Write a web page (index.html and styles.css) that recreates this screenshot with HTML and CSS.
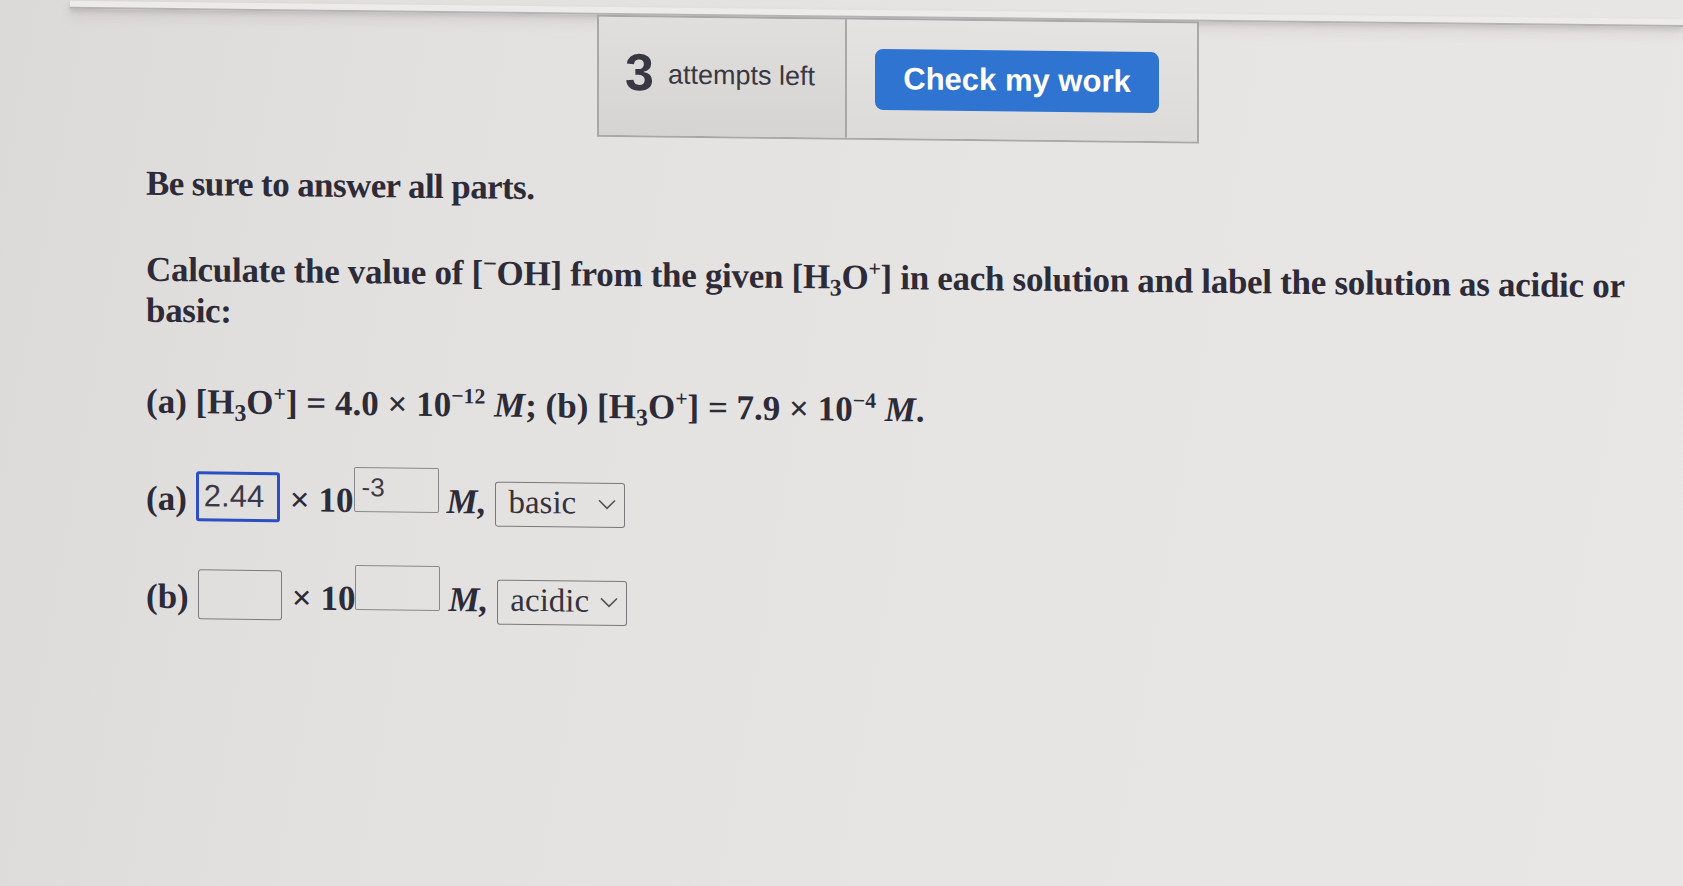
FILE: index.html
```html
<!DOCTYPE html>
<html lang="en">
<head>
<meta charset="utf-8">
<title>Question</title>
<link rel="stylesheet" href="styles.css">
</head>
<body>
<div class="screen">
  <div class="topbar"></div>

  <div class="toolbar">
    <div class="attempts">
      <span class="count">3</span>
      <span class="label">attempts left</span>
    </div>
    <div class="actions">
      <button class="check" type="button">Check my work</button>
    </div>
  </div>

  <div class="question">
    <p class="intro">Be sure to answer all parts.</p>
    <p class="prompt">Calculate the value of [<sup class="pre">&minus;</sup>OH] from the given [H<sub>3</sub>O<sup>+</sup>] in each solution and label the solution as acidic or basic:</p>
    <p class="given">(a) [H<sub>3</sub>O<sup>+</sup>] = 4.0 &times; 10<sup>&minus;12</sup> <i>M</i>; (b) [H<sub>3</sub>O<sup>+</sup>] = 7.9 &times; 10<sup>&minus;4</sup> <i>M</i>.</p>

    <div class="answer answer-a">
      <span class="tag">(a)</span>
      <span class="mantissa active">2.44</span>
      <span class="times">&times; 10</span>
      <span class="exponent">-3</span>
      <span class="unit">M,</span>
      <span class="select"><span class="choice">basic</span><svg class="chev" width="18" height="11" viewBox="0 0 18 11"><path d="M1 1.5 L9 9.5 L17 1.5" fill="none" stroke="#55525a" stroke-width="1.6"/></svg></span>
    </div>

    <div class="answer answer-b">
      <span class="tag">(b)</span>
      <span class="mantissa"></span>
      <span class="times">&times; 10</span>
      <span class="exponent"></span>
      <span class="unit">M,</span>
      <span class="select"><span class="choice">acidic</span><svg class="chev" width="18" height="11" viewBox="0 0 18 11"><path d="M1 1.5 L9 9.5 L17 1.5" fill="none" stroke="#55525a" stroke-width="1.6"/></svg></span>
    </div>
  </div>
</div>
</body>
</html>
```

FILE: styles.css
```css
* {
  box-sizing: border-box;
}

html,
body {
  margin: 0;
  height: 100%;
}

body {
  background: linear-gradient(100deg, #dcdad9 0%, #e3e1e0 25%, #e7e5e4 60%, #e9e7e6 100%);
  font-family: "Liberation Serif", "Times New Roman", serif;
  color: #2d2b38;
  overflow: hidden;
}

/* the whole screen sits at a slight slant */
.screen {
  height: 100%;
  transform: skewY(0.65deg);
  transform-origin: 0 0;
}

/* header edge with its soft shadow */
.topbar {
  height: 8px;
  margin-left: 70px;
  background: #ecebea;
  border-bottom: 2px solid #b5b3b4;
  box-shadow: 0 3px 4px rgba(100, 96, 98, 0.22), 0 8px 12px rgba(110, 105, 105, 0.14);
}

/* attempts + submit strip */
.toolbar {
  display: flex;
  width: 602px;
  height: 122px;
  margin: 0 0 0 597px;
  border: 2px solid #aaa7a9;
  position: relative;
}

.attempts {
  width: 246px;
  display: flex;
  align-items: center;
  padding: 0 0 8px 26px;
  background: linear-gradient(#e1dfde, #d6d4d3);
  font-family: "Liberation Sans", Arial, sans-serif;
  color: #393842;
}

.attempts .count {
  font-size: 52px;
  font-weight: 700;
  margin-right: 14px;
}

.attempts .label {
  font-size: 27px;
  padding-top: 4px;
}

.actions {
  flex: 1;
  display: flex;
  align-items: center;
  padding-left: 28px;
  border-left: 2px solid #aaa7a9;
  background: linear-gradient(#e5e3e2, #dddbda);
}

.check {
  width: 284px;
  height: 61px;
  border: none;
  border-radius: 8px;
  background: #2e74d0;
  color: #ffffff;
  font: 700 31px "Liberation Sans", Arial, sans-serif;
  padding: 0;
}

/* question body */
.question {
  width: 1510px;
  margin: 31px 0 0 146px;
  font-size: 35px;
  line-height: 41px;
  font-weight: 700;
}

.question p {
  margin: 0;
}

.intro {
  letter-spacing: -0.6px;
}

.prompt {
  margin-top: 45px !important;
  letter-spacing: -0.3px;
}

.given {
  margin-top: 50px !important;
}

sup,
sub {
  position: relative;
  font-size: 0.62em;
  line-height: 0;
  vertical-align: baseline;
}

sup {
  top: -0.6em;
}

sub {
  font-size: 0.68em;
  bottom: -0.3em;
}

sup.pre {
  font-size: 0.7em;
  top: -0.55em;
}

/* answer rows */
.answer {
  display: flex;
  align-items: flex-start;
  height: 58px;
}

.answer-a {
  margin-top: 43px;
}

.answer-b {
  margin-top: 40px;
}

.tag,
.times,
.unit {
  margin-top: 13px;
  white-space: nowrap;
}

.mantissa {
  width: 84px;
  height: 50px;
  margin: 6px 0 0 9px;
  padding-left: 5px;
  display: flex;
  align-items: center;
  border: 1.5px solid #7f7c80;
  border-radius: 3px;
  font: 400 31px "Liberation Sans", Arial, sans-serif;
  color: #3a3945;
}

.mantissa.active {
  border: 3px solid #2c4fc3;
}

.times {
  margin-left: 10px;
}

.exponent {
  width: 85px;
  height: 45px;
  padding: 6px 0 0 7px;
  border: 1.5px solid #8a878a;
  border-radius: 2px;
  font: 400 26px/26px "Liberation Sans", Arial, sans-serif;
  color: #3a3945;
}

.unit {
  margin-left: 8px;
  font-style: italic;
}

.select {
  width: 130px;
  height: 45px;
  margin: 13px 0 0 9px;
  padding: 0 8px 4px 12px;
  display: flex;
  align-items: center;
  border: 1.5px solid #7b787b;
  border-radius: 3px;
  font-size: 33px;
  font-weight: 400;
  color: #34323d;
}

.choice {
  line-height: 1;
}

.chev {
  margin-left: auto;
  margin-top: 2px;
}
```
